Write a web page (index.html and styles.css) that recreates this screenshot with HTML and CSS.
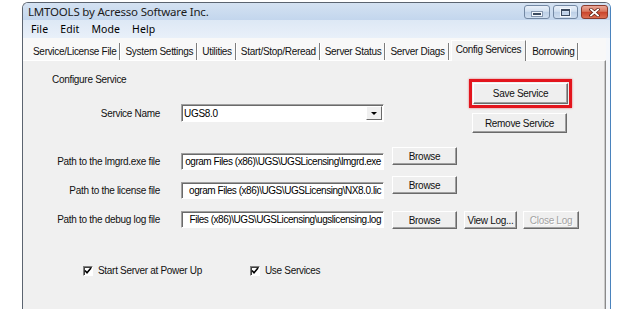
FILE: index.html
```html
<!DOCTYPE html>
<html lang="en">
<head>
    <meta charset="UTF-8">
    <title>LMTOOLS by Acresso Software Inc.</title>
    <link rel="stylesheet" href="styles.css">
</head>
<body>
    <div class="window">
        <div class="titlebar">
            <span class="title">LMTOOLS by Acresso Software Inc.</span>
            <div class="caption">
                <span class="cap-btn"><i class="min-glyph"></i></span>
                <span class="cap-btn max"><i class="max-glyph"></i></span>
                <span class="cap-btn close">
                    <svg width="11" height="9" viewBox="0 0 11 9">
                        <path d="M2 1.5 L9 7.5 M9 1.5 L2 7.5" stroke="#5a1d12" stroke-width="3.2" stroke-linecap="square"/>
                        <path d="M2 1.5 L9 7.5 M9 1.5 L2 7.5" stroke="#fff" stroke-width="1.8" stroke-linecap="square"/>
                    </svg>
                </span>
            </div>
        </div>

        <div class="menubar">
            <span>File</span>
            <span>Edit</span>
            <span>Mode</span>
            <span>Help</span>
        </div>

        <div class="tabs">
            <span class="tab">Service/License File</span>
            <span class="tab">System Settings</span>
            <span class="tab">Utilities</span>
            <span class="tab">Start/Stop/Reread</span>
            <span class="tab">Server Status</span>
            <span class="tab">Server Diags</span>
            <span class="tab active">Config Services</span>
            <span class="tab">Borrowing</span>
        </div>

        <div class="panel">
            <div class="top">
                <div class="service">
                    <div class="heading">Configure Service</div>
                    <div class="service-row">
                        <span class="label">Service Name</span>
                        <div class="combo">
                            <span class="combo-text">UGS8.0</span>
                            <span class="combo-arrow"><i></i></span>
                        </div>
                    </div>
                </div>
                <div class="service-actions">
                    <div class="highlight">
                        <button class="btn wide">Save Service</button>
                    </div>
                    <button class="btn wide remove">Remove Service</button>
                </div>
            </div>

            <div class="paths">
                <div class="path-row raised">
                    <span class="label">Path to the lmgrd.exe file</span>
                    <div class="field"><span>ogram Files (x86)\UGS\UGSLicensing\lmgrd.exe</span></div>
                    <button class="btn browse">Browse</button>
                </div>
                <div class="path-row raised">
                    <span class="label">Path to the license file</span>
                    <div class="field"><span>ogram Files (x86)\UGS\UGSLicensing\NX8.0.lic</span></div>
                    <button class="btn browse">Browse</button>
                </div>
                <div class="path-row">
                    <span class="label">Path to the debug log file</span>
                    <div class="field"><span>Files (x86)\UGS\UGSLicensing\ugslicensing.log</span></div>
                    <button class="btn browse">Browse</button>
                    <button class="btn view-log">View Log...</button>
                    <button class="btn close-log" disabled>Close Log</button>
                </div>
            </div>

            <div class="checks">
                <label class="check">
                    <span class="box"><svg width="8" height="8" viewBox="0 0 8 8"><path d="M1 3.5 L3 5.8 L7 1" fill="none" stroke="#000" stroke-width="1.6"/></svg></span>
                    Start Server at Power Up
                </label>
                <label class="check second">
                    <span class="box"><svg width="8" height="8" viewBox="0 0 8 8"><path d="M1 3.5 L3 5.8 L7 1" fill="none" stroke="#000" stroke-width="1.6"/></svg></span>
                    Use Services
                </label>
            </div>
        </div>
    </div>
</body>
</html>
```

FILE: styles.css
```css
* {
    margin: 0;
    padding: 0;
    box-sizing: border-box;
}

body {
    background: #fff;
    padding: 2px 0 0 22px;
    height: 309px;
    overflow: hidden;
    font-family: "Liberation Sans", Arial, sans-serif;
    font-size: 10px;
    letter-spacing: -0.3px;
    color: #111;
}

.window {
    width: 589px;
    height: 330px;
    display: flex;
    flex-direction: column;
    border: 1px solid #5b6470;
    border-right-color: #4a83bd;
    border-bottom: none;
    border-radius: 6px 6px 0 0;
    background: #f4f7fb;
    overflow: hidden;
}

/* title bar */
.titlebar {
    height: 17px;
    display: flex;
    justify-content: space-between;
    padding-left: 5px;
    background: linear-gradient(#d4e2f2, #c3d6ed);
}

.title {
    font-family: "Noto Sans", sans-serif;
    font-size: 11.5px;
    line-height: 17px;
    letter-spacing: -0.2px;
    color: #1b1b1b;
}

.caption {
    display: flex;
    gap: 3px;
    margin: 2px 2px 0 0;
}

.cap-btn {
    width: 26px;
    height: 14px;
    display: flex;
    align-items: center;
    justify-content: center;
    border: 1px solid #7388a3;
    border-radius: 3px;
    background: linear-gradient(#e9f0f9 0%, #d2e0f0 45%, #bccfe7 50%, #cfdef0 100%);
}

.cap-btn.max {
    width: 25px;
}

.cap-btn.close {
    width: 27px;
    border-color: #8b3b2d;
    background: linear-gradient(#eaa899 0%, #d9775f 45%, #c9432b 50%, #dc6e52 100%);
}

.min-glyph {
    width: 10px;
    height: 4px;
    margin-top: 4px;
    background: #3c4b60;
    border: 1px solid #f4f8fc;
    box-shadow: 0 0 0 1px #8597b0;
}

.max-glyph {
    width: 9px;
    height: 7px;
    border: 1px solid #3c4b60;
    border-top-width: 2px;
    box-shadow: 0 0 0 1px #f4f8fc;
}

/* menu */
.menubar {
    height: 18px;
    display: flex;
    gap: 12px;
    padding: 1px 0 0 8px;
    font-family: "Noto Sans", sans-serif;
    font-size: 10.5px;
    line-height: 17px;
    letter-spacing: 0.1px;
    color: #000;
    background: linear-gradient(#dde8f5, #e9f0f9);
}

/* tabs */
.tabs {
    height: 22px;
    display: flex;
    align-items: flex-end;
    padding-left: 5px;
    margin-right: 4px;
    background: #f8f8f8;
}

.tab {
    height: 17px;
    line-height: 17px;
    padding: 0 3px 0 5px;
    border-right: 1px solid #7c7c7c;
    box-shadow: 1px 0 #fff;
    white-space: nowrap;
}

.tab.active {
    position: relative;
    z-index: 1;
    height: 21px;
    line-height: 18px;
    margin: 0 1px -1px 2px;
    padding: 0 4px;
    background: #f3f3f3;
    border-top: 1px solid #fff;
    border-left: 1px solid #fff;
}

/* panel */
.panel {
    flex: 1;
    margin-right: 4px;
    padding: 12px 0 0 29px;
    background: #f0f0f0;
    border-top: 1px solid #fff;
    border-right: 1px solid #8a8a8a;
    box-shadow: inset -1px 0 #c9c9c9;
}

.top {
    display: flex;
    align-items: flex-start;
}

.service {
    width: 332px;
}

.heading {
    line-height: 14px;
}

.service-row {
    display: flex;
    align-items: center;
    margin-top: 17px;
}

.label {
    width: 108px;
    margin-right: 21px;
    text-align: right;
    line-height: 17px;
    white-space: nowrap;
}

.combo {
    width: 203px;
    height: 18px;
    display: flex;
    background: #fff;
    border: 1px solid;
    border-color: #a0a0a0 #fff #fff #a0a0a0;
    box-shadow: inset 1px 1px #6a6a6a;
}

.combo-text {
    flex: 1;
    padding: 1px 0 0 2px;
    line-height: 15px;
    color: #000;
}

.combo-arrow {
    width: 16px;
    margin: 1px 1px 1px 0;
    display: flex;
    align-items: center;
    justify-content: center;
    background: #f0f0f0;
    border: 1px solid;
    border-color: #fff #6a6a6a #6a6a6a #fff;
}

.combo-arrow i {
    width: 0;
    height: 0;
    border-left: 3px solid transparent;
    border-right: 3px solid transparent;
    border-top: 3px solid #000;
}

.service-actions {
    display: flex;
    flex-direction: column;
    margin: 6px 0 0 85px;
}

.highlight {
    padding: 1px;
    border: 3px solid #e3151d;
    box-shadow: 0 0 2px rgba(220, 20, 30, 0.6);
}

/* buttons */
.btn {
    height: 18px;
    font-family: inherit;
    font-size: 10px;
    letter-spacing: -0.3px;
    color: #111;
    background: #efefef;
    border: 1px solid;
    border-color: #fff #6a6a6a #6a6a6a #fff;
    box-shadow: inset -1px -1px #a0a0a0;
}

.btn.wide {
    width: 95px;
    height: 21px;
}

.btn.remove {
    height: 20px;
    margin: 5px 0 0 3px;
}

.paths {
    display: flex;
    flex-direction: column;
    gap: 12px;
    margin-top: 20px;
}

.path-row {
    display: flex;
    align-items: flex-start;
}

.field {
    width: 203px;
    height: 17px;
    display: flex;
    justify-content: flex-end;
    overflow: hidden;
    white-space: nowrap;
    padding: 1px 2px 0 2px;
    line-height: 14px;
    letter-spacing: -0.45px;
    color: #000;
    background: #fff;
    border: 1px solid;
    border-color: #a0a0a0 #fff #fff #a0a0a0;
    box-shadow: inset 1px 1px #6a6a6a;
}

.browse {
    width: 65px;
    margin-left: 8px;
}

.raised .browse {
    margin-top: -6px;
}

.view-log {
    width: 53px;
    margin-left: 7px;
}

.close-log {
    width: 56px;
    margin-left: 6px;
    color: #a3a3a3;
    text-shadow: 1px 1px #fff;
}

/* checkboxes */
.checks {
    display: flex;
    margin: 35px 0 0 31px;
    line-height: 14px;
}

.check {
    display: flex;
    align-items: center;
    gap: 5px;
}

.check.second {
    margin-left: 48px;
}

.box {
    width: 10px;
    height: 10px;
    display: flex;
    align-items: center;
    justify-content: center;
    background: #fff;
    border: 1px solid;
    border-color: #808080 #fff #fff #808080;
    box-shadow: inset 1px 1px #404040;
}
```
